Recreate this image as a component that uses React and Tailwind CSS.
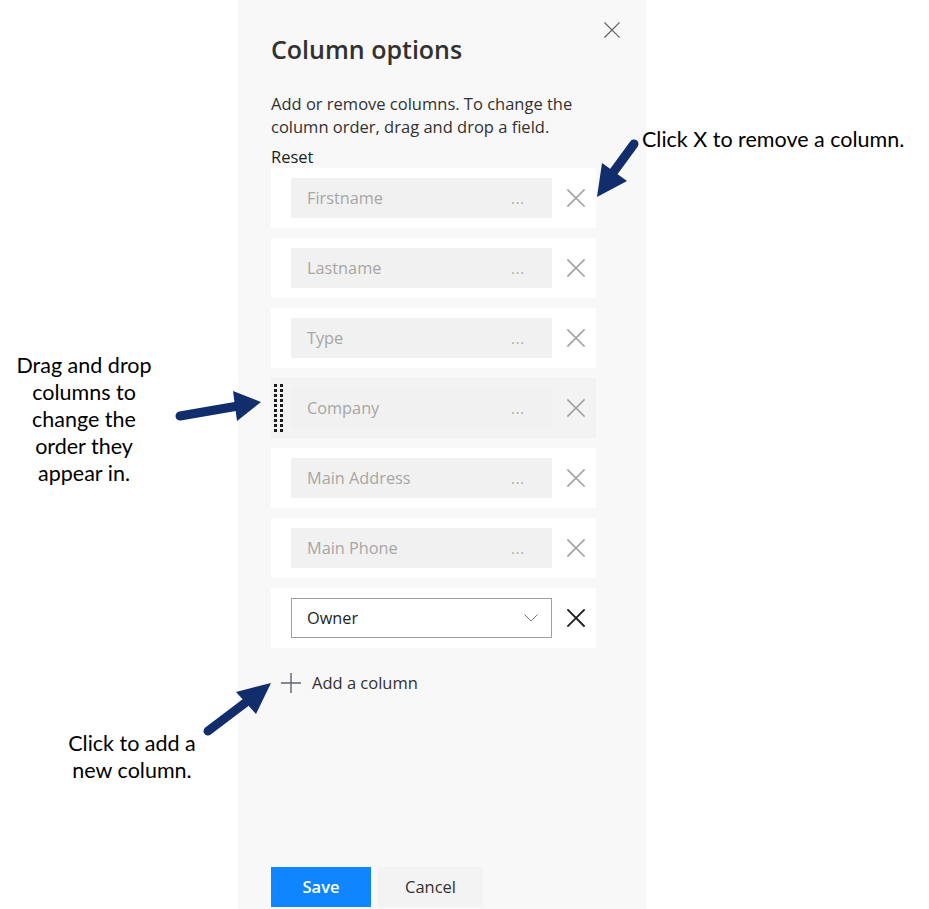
import React from "react";

const panelFont = { fontFamily: '"Segoe UI", "Open Sans", "Noto Sans", sans-serif' };

function XIcon({ color = "#a19f9d", size = 18, sw = 1.6 }) {
  return (
    <svg width={size} height={size} viewBox="0 0 18 18" fill="none">
      <path d="M1 1L17 17M17 1L1 17" stroke={color} strokeWidth={sw} strokeLinecap="square" />
    </svg>
  );
}

function DragHandle() {
  const rows = Array.from({ length: 10 });
  return (
    <div className="flex flex-col gap-[2px] w-[10px] mr-[7px]">
      {rows.map((_, i) => (
        <div key={i} className="flex gap-[3px]">
          <div className="w-[3px] h-[3px] bg-[#1c1c1c]" />
          <div className="w-[3px] h-[3px] bg-[#1c1c1c]" />
        </div>
      ))}
    </div>
  );
}

function Row({ label, dragging }) {
  return (
    <div
      className={
        "h-[60px] w-[325px] flex items-center " +
        (dragging ? "bg-[#f3f3f3] pl-[3px]" : "bg-white pl-[20px]")
      }
    >
      {dragging && <DragHandle />}
      <div className="w-[261px] h-[40px] bg-[#f1f1f1] flex items-center justify-between pl-[16px] pr-[27px]">
        <span className="text-[16.3px] text-[#a8a6a4]">{label}</span>
        <span className="text-[14px] text-[#a8a6a4] tracking-[1px]">...</span>
      </div>
      <div className="w-[24px] h-[24px] ml-[12px] flex items-center justify-center">
        <XIcon />
      </div>
    </div>
  );
}

function OwnerRow() {
  return (
    <div className="h-[60px] w-[325px] bg-white flex items-center pl-[20px]">
      <div className="w-[261px] h-[40px] bg-white border border-[#a19f9d] flex items-center justify-between pl-[15px] pr-[13px]">
        <span className="text-[16.3px] text-[#201f1e]">Owner</span>
        <svg width="14" height="8" viewBox="0 0 14 8" fill="none">
          <path d="M0.5 0.5L7 7L13.5 0.5" stroke="#7a7876" strokeWidth="1" />
        </svg>
      </div>
      <div className="w-[24px] h-[24px] ml-[12px] flex items-center justify-center">
        <XIcon color="#201f1e" sw={1.8} />
      </div>
    </div>
  );
}

function Arrow({ x1, y1, x2, y2, head }) {
  return (
    <g>
      <line x1={x1} y1={y1} x2={x2} y2={y2} stroke="#112d6b" strokeWidth="9" strokeLinecap="round" />
      <polygon points={head} fill="#112d6b" />
    </g>
  );
}

export default function App() {
  const annot = { fontFamily: 'Lato, "Liberation Sans", sans-serif' };
  return (
    <div className="relative w-[929px] h-[909px] bg-white flex overflow-hidden">
      <div className="w-[238px] shrink-0" />
      <div
        className="relative w-[408px] h-[909px] bg-[#f8f8f8] flex flex-col pl-[33px] shrink-0"
        style={panelFont}
      >
        <button className="absolute top-[22px] right-[26px] w-[16px] h-[16px] flex items-center justify-center">
          <XIcon color="#605e5c" size={16} sw={1.3} />
        </button>
        <h1 className="mt-[33px] h-[32px] leading-[32px] text-[25px] font-semibold text-[#323130]">
          Column options
        </h1>
        <p className="mt-[27px] text-[16.5px] leading-[23px] text-[#323130] w-[340px]">
          Add or remove columns. To change the
          <br />
          column order, drag and drop a field.
        </p>
        <div className="mt-[8px] h-[22px] leading-[22px] text-[16.5px] text-[#201f1e]">Reset</div>
        <div className="flex flex-col gap-[10px]">
          <Row label="Firstname" />
          <Row label="Lastname" />
          <Row label="Type" />
          <Row label="Company" dragging />
          <Row label="Main Address" />
          <Row label="Main Phone" />
          <OwnerRow />
        </div>
        <div className="mt-[19px] h-[32px] flex items-center pl-[10px]">
          <svg width="20" height="20" viewBox="0 0 20 20" fill="none">
            <path d="M10 0V20M0 10H20" stroke="#5c6470" strokeWidth="1.4" />
          </svg>
          <span className="ml-[11px] text-[16.5px] text-[#323130]">Add a column</span>
        </div>
        <div className="mt-auto mb-[2px] flex gap-[7px]">
          <button className="w-[100px] h-[40px] bg-[#0f86ff] text-white text-[16.5px] font-semibold">
            Save
          </button>
          <button className="w-[105px] h-[40px] bg-[#f3f3f3] text-[#323130] text-[16.5px]">
            Cancel
          </button>
        </div>
      </div>

      {/* annotations */}
      <div
        className="absolute left-[642px] top-[126px] text-[21.5px] leading-[27px] text-black whitespace-nowrap"
        style={annot}
      >
        Click X to remove a column.
      </div>
      <div
        className="absolute left-[4px] top-[352px] w-[160px] text-center text-[21.5px] leading-[27px] text-black"
        style={annot}
      >
        Drag and drop
        <br />
        columns to
        <br />
        change the
        <br />
        order they
        <br />
        appear in.
      </div>
      <div
        className="absolute left-[52px] top-[730px] w-[160px] text-center text-[21.5px] leading-[27px] text-black"
        style={annot}
      >
        Click to add a
        <br />
        new column.
      </div>
      <svg className="absolute left-0 top-0 pointer-events-none" width="929" height="909">
        <Arrow x1={634} y1={144} x2={612} y2={174} head="597,197 602,163 627,181" />
        <Arrow x1={180} y1={416} x2={238} y2={406} head="261,402 233,391 237,421" />
        <Arrow x1={208} y1={731} x2={245} y2={703} head="271,683 236,692 256,714" />
      </svg>
    </div>
  );
}
